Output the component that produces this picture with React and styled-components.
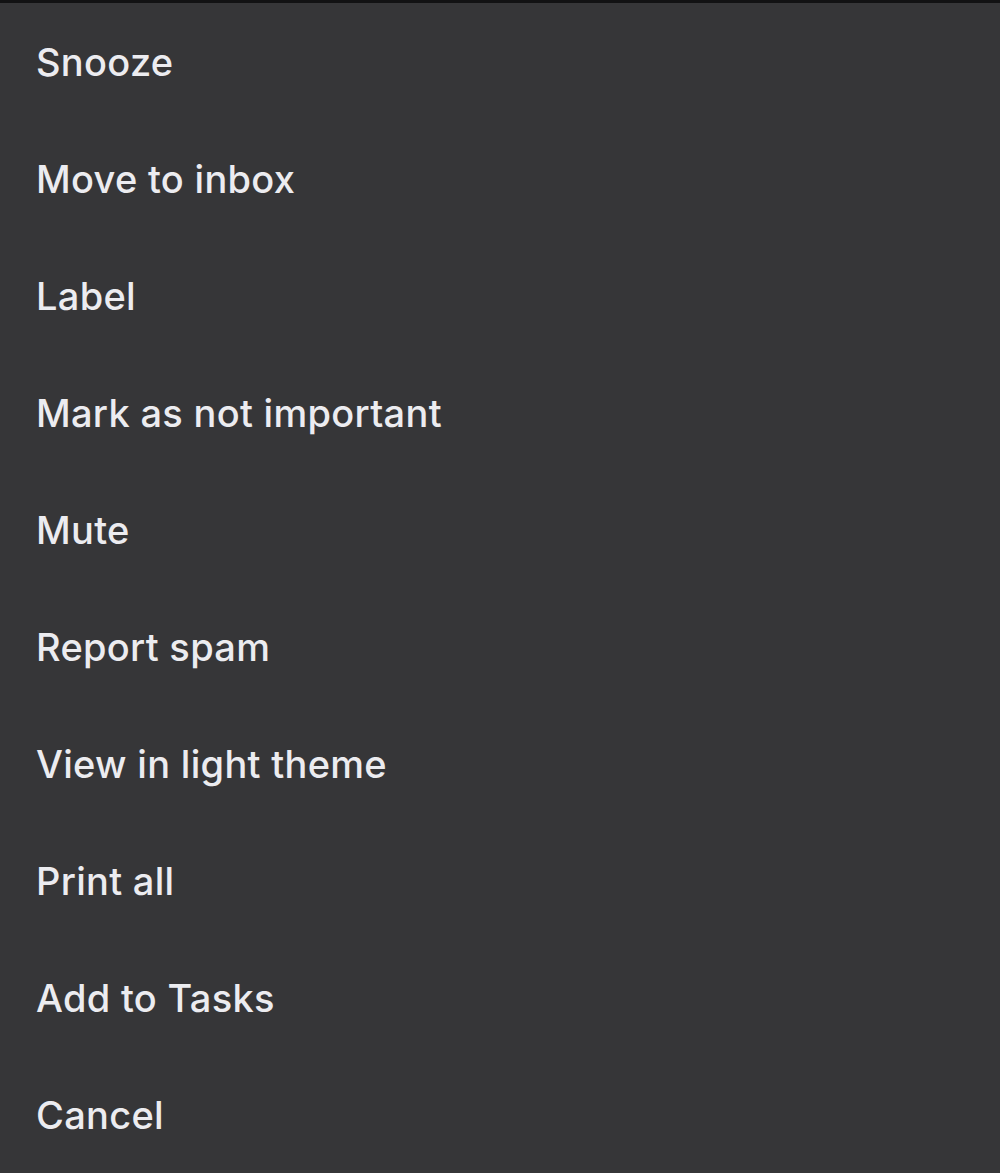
import React from 'react';
import styled, { createGlobalStyle } from 'styled-components';

const items = [
  'Snooze',
  'Move to inbox',
  'Label',
  'Mark as not important',
  'Mute',
  'Report spam',
  'View in light theme',
  'Print all',
  'Add to Tasks',
  'Cancel',
];

const GlobalStyle = createGlobalStyle`
  html, body {
    margin: 0;
    padding: 0;
    background: #363638;
  }
`;

const Sheet = styled.div`
  width: 1000px;
  height: 1173px;
  box-sizing: border-box;
  border-top: 3px solid #121213;
  background: #363638;
  display: flex;
  flex-direction: column;
  font-family: Inter, "Liberation Sans", sans-serif;
`;

const Item = styled.div`
  flex: 1;
  display: flex;
  align-items: center;
  padding-left: 36px;
  font-size: 38px;
  font-weight: 500;
  letter-spacing: 0.3px;
  color: #ececf0;
  cursor: pointer;
`;

const App = () => {
  return (
    <>
      <GlobalStyle />
      <Sheet>
        {items.map((label) => (
          <Item key={label}>{label}</Item>
        ))}
      </Sheet>
    </>
  );
};

export default App;
